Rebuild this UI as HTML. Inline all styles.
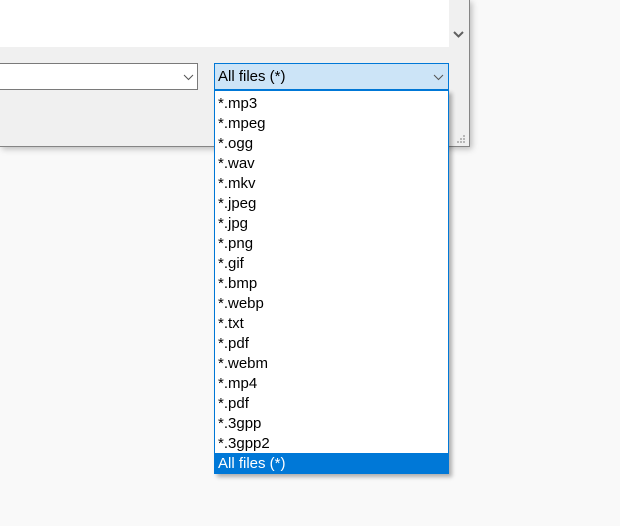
<!DOCTYPE html>
<html><head><style>
body{margin:0;width:620px;height:526px;background:#f9f9f9;position:relative;overflow:hidden;font-family:"Segoe UI","Liberation Sans",sans-serif;font-size:15px;}
.win{position:absolute;left:0;top:0;width:469px;height:146px;background:#f0f0f0;border-right:1px solid #858585;border-bottom:1px solid #858585;box-shadow:2px 2px 6px rgba(0,0,0,.25);}
.white{position:absolute;left:0;top:0;width:449px;height:47px;background:#fff;}
.sb{position:absolute;left:449px;top:0;width:20px;height:47px;background:#f0f0f0;}
.combo{position:absolute;top:63px;height:27px;box-sizing:border-box;}
.c1{left:-1px;width:199px;background:#fff;border:1px solid #7a7a7a;}
.c2{left:214px;width:235px;background:#cce4f7;border:1px solid #0078d7;}
.c2 span{position:absolute;left:3px;top:4px;color:#000;}
.list{position:absolute;left:214px;top:90px;width:235px;height:384px;box-sizing:border-box;border:1px solid #0078d7;background:#fff;box-shadow:3px 3px 4px rgba(0,0,0,.3);padding-top:2px;}
.it{height:20px;line-height:22px;padding-left:3px;color:#000;overflow:hidden;}
.sel{background:#0078d7;color:#fff;}
</style></head><body>
<div class="win">
<div class="white"></div>
<div class="sb"><svg width="20" height="47" style="position:absolute;left:0;top:0"><path d="M5 32 L9.5 36.5 L14 32" stroke="#606060" stroke-width="2" fill="none"/></svg></div>
<svg width="14" height="14" style="position:absolute;left:454px;top:132px"><g fill="#b8b8b8"><rect x="9" y="3" width="2" height="2"/><rect x="6" y="6" width="2" height="2"/><rect x="9" y="6" width="2" height="2"/><rect x="3" y="9" width="2" height="2"/><rect x="6" y="9" width="2" height="2"/><rect x="9" y="9" width="2" height="2"/></g></svg>
</div>
<div class="combo c1"><svg width="12" height="8" style="position:absolute;left:183px;top:10px"><path d="M1 1 L5.5 5.5 L10 1" stroke="#555" stroke-width="1" fill="none"/></svg></div>
<div class="combo c2"><span>All files (*)</span><svg width="12" height="8" style="position:absolute;left:218px;top:10px"><path d="M1 1 L5.5 5.5 L10 1" stroke="#555" stroke-width="1" fill="none"/></svg></div>
<div class="list">
<div class="it">*.mp3</div><div class="it">*.mpeg</div><div class="it">*.ogg</div><div class="it">*.wav</div><div class="it">*.mkv</div><div class="it">*.jpeg</div><div class="it">*.jpg</div><div class="it">*.png</div><div class="it">*.gif</div><div class="it">*.bmp</div><div class="it">*.webp</div><div class="it">*.txt</div><div class="it">*.pdf</div><div class="it">*.webm</div><div class="it">*.mp4</div><div class="it">*.pdf</div><div class="it">*.3gpp</div><div class="it">*.3gpp2</div><div class="it sel">All files (*)</div>
</div>
</body></html>
